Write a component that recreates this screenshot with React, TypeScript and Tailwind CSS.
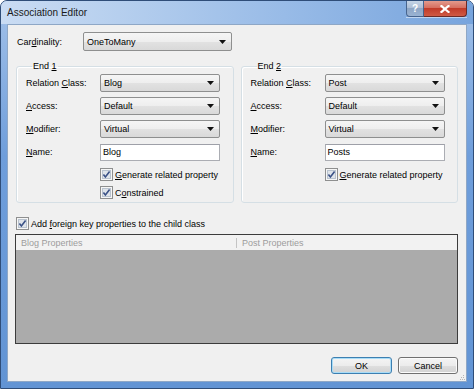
import React from "react";

const ui = "font-['Liberation_Sans',Arial,sans-serif] text-[9px] leading-[12px] text-[#000]";

function U({ children }: { children: React.ReactNode }) {
  return <span className="underline underline-offset-[1px]">{children}</span>;
}

function Combo({ value, className = "" }: { value: string; className?: string }) {
  return (
    <div
      className={`flex items-center rounded-[2px] border border-[#8e8f8f] bg-[linear-gradient(to_bottom,#f5f5f5_0%,#eeeeee_50%,#e2e2e2_50%,#d9d9d9_100%)] pl-[3px] pr-[5px] ${className}`}
    >
      <span className="flex-1">{value}</span>
      <svg width="7" height="4" viewBox="0 0 7 4">
        <path d="M0 0h7L3.5 4z" fill="#111" />
      </svg>
    </div>
  );
}

function CheckBox() {
  return (
    <svg width="13" height="13" viewBox="0 0 13 13" className="shrink-0">
      <rect x="0.5" y="0.5" width="12" height="12" fill="#f6f6f6" stroke="#8e8f8f" />
      <rect x="2.5" y="2.5" width="8" height="8" fill="#dfe4ea" stroke="#b9c3cf" />
      <path d="M3.4 6.4 L5.4 9 L9.6 3.4" stroke="#3b5287" strokeWidth="1.6" fill="none" />
    </svg>
  );
}

function Check({ children, className = "" }: { children: React.ReactNode; className?: string }) {
  return (
    <div className={`flex items-center h-[13px] gap-[2px] ${className}`}>
      <CheckBox />
      <span>{children}</span>
    </div>
  );
}

function Row({ label, children }: { label: React.ReactNode; children: React.ReactNode }) {
  return (
    <div className="flex items-center h-[18px]">
      <span className="w-[74px] shrink-0">{label}</span>
      {children}
    </div>
  );
}

function Group({
  title,
  cls,
  name,
  constrained,
}: {
  title: React.ReactNode;
  cls: string;
  name: string;
  constrained?: boolean;
}) {
  return (
    <fieldset className="rounded-[3px] border border-[#d5dfe5] shadow-[inset_1px_1px_0_#ffffff] pl-[9px] pt-[2px] pb-[3px]">
      <legend className="ml-[6px] px-[1px]">{title}</legend>
      <div className="flex flex-col gap-[5px]">
        <Row label={<>Relation <U>C</U>lass:</>}>
          <Combo value={cls} className="w-[120px] h-[18px]" />
        </Row>
        <Row label={<><U>A</U>ccess:</>}>
          <Combo value="Default" className="w-[120px] h-[18px]" />
        </Row>
        <Row label={<><U>M</U>odifier:</>}>
          <Combo value="Virtual" className="w-[120px] h-[18px]" />
        </Row>
        <Row label={<><U>N</U>ame:</>}>
          <div className="w-[120px] h-[17px] border border-[#abadb3] border-t-[#9ea0a8] bg-white pl-[2px] flex items-center">
            {name}
          </div>
        </Row>
      </div>
      <div className="flex flex-col gap-[5px] mt-[7px] ml-[74px]">
        <Check><U>G</U>enerate related property</Check>
        {constrained && (
          <Check>
            C<U>o</U>nstrained
          </Check>
        )}
      </div>
    </fieldset>
  );
}

function Button({ children, primary }: { children: React.ReactNode; primary?: boolean }) {
  return (
    <div
      className={`h-[17px] flex items-center justify-center rounded-[3px] border bg-[linear-gradient(to_bottom,#f4f4f4_0%,#ececec_50%,#dfdfdf_50%,#d2d2d2_100%)] ${
        primary
          ? "w-[61px] border-[#3c7fb1] shadow-[inset_0_0_0_1px_#a8dcf7]"
          : "w-[60px] border-[#707070] shadow-[inset_0_0_0_1px_#fbfbfb]"
      }`}
    >
      {children}
    </div>
  );
}

export default function App() {
  return (
    <div className={`${ui} w-[474px] h-[389px] flex flex-col rounded-t-[7px] border border-[#2f4d78] bg-[linear-gradient(to_bottom,#a2c1e9,#6f9edb_40%,#6294d4)] overflow-hidden`}>
      {/* title bar */}
      <div className="h-[23px] shrink-0 flex items-start bg-[linear-gradient(to_right,#cadcf3_0%,#b6cfee_25%,#98bbe7_60%,#77a4dd_100%)]">
        <div className="flex-1 h-full flex items-center pl-[6px] text-[10px] text-[#1a1a1a]">
          Association Editor
        </div>
        <div className="flex mr-[6px] shadow-[0_1px_0_#ffffff80]">
          <div className="w-[18px] h-[16px] flex items-center justify-center rounded-bl-[4px] border border-t-0 border-[#47648e] bg-[linear-gradient(to_bottom,#c5d4e6_0%,#aabcd4_50%,#8ea6c5_50%,#9ab3d3_100%)] text-white text-[10px] font-bold">
            ?
          </div>
          <div className="w-[43px] h-[16px] flex items-center justify-center rounded-br-[4px] border border-t-0 border-l-0 border-[#6b2a26] bg-[linear-gradient(to_bottom,#e39a8c_0%,#d46a5b_50%,#c13b29_50%,#cf5a44_100%)] text-white text-[11px] font-bold">
            <svg width="10" height="8" viewBox="0 0 10 8">
              <path d="M1.5 1 L8.5 7 M8.5 1 L1.5 7" stroke="#fff" strokeWidth="2.2" strokeLinecap="square" />
            </svg>
          </div>
        </div>
      </div>

      {/* body */}
      <div className="flex-1 flex px-[6px] pb-[6px]">
        <div className="relative flex-1 flex flex-col border border-[#8ea7c6] bg-[#f0f0f0] pl-[7px] pr-[8px] pt-[7px]">
          <div className="flex items-center h-[19px] ml-[2px]">
            <span className="w-[66px] shrink-0">
              Car<U>d</U>inality:
            </span>
            <Combo value="OneToMany" className="w-[149px] h-[19px]" />
          </div>

          <div className="grid grid-cols-2 gap-[7px] ml-[1px] mt-[9px]">
            <Group title={<>End <U>1</U></>} cls="Blog" name="Blog" constrained />
            <Group title={<>End <U>2</U></>} cls="Post" name="Posts" />
          </div>

          <Check className="mt-[14px] ml-[1px]">
            Add <U>f</U>oreign key properties to the child class
          </Check>

          <div className="mt-[4px] h-[110px] flex flex-col border border-[#3c3c3c] bg-[#ababab]">
            <div className="h-[15px] flex items-center bg-[#f2f2f2] text-[#9d9d9d]">
              <div className="w-[220px] pl-[5px]">Blog Properties</div>
              <div className="w-px h-[10px] bg-[#c4c4c4]" />
              <div className="pl-[5px]">Post Properties</div>
            </div>
          </div>

          <div className="mt-[13px] flex justify-end gap-[6px]">
            <Button primary>OK</Button>
            <Button>Cancel</Button>
          </div>

          <svg width="5" height="5" viewBox="0 0 5 5" className="absolute right-[1px] bottom-[1px]">
            <rect x="3" y="0" width="1" height="1" fill="#b5b5b5" />
            <rect x="1" y="2" width="1" height="1" fill="#b5b5b5" />
            <rect x="3" y="2" width="1" height="1" fill="#b5b5b5" />
            <rect x="0" y="4" width="1" height="1" fill="#b5b5b5" />
            <rect x="2" y="4" width="1" height="1" fill="#b5b5b5" />
            <rect x="4" y="4" width="1" height="1" fill="#b5b5b5" />
          </svg>
        </div>
      </div>
    </div>
  );
}
